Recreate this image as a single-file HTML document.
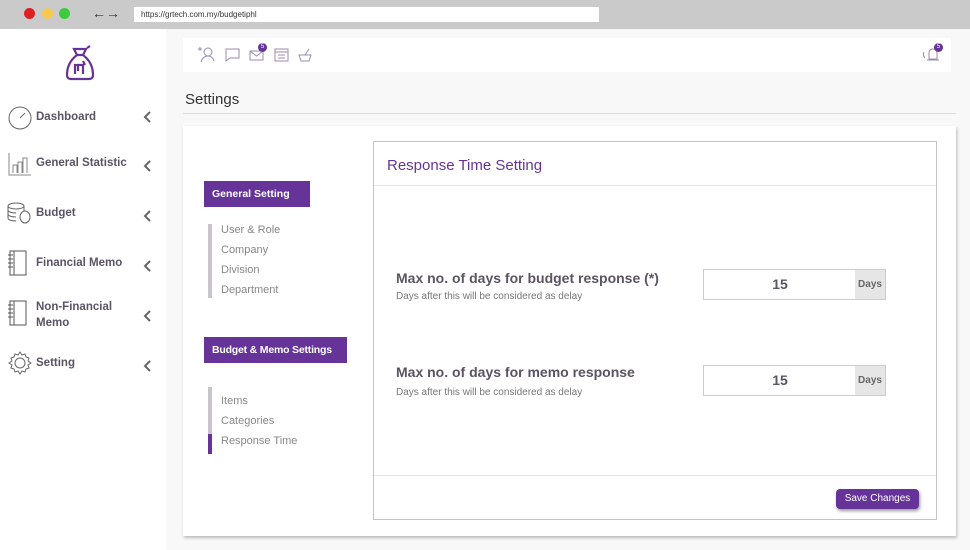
<!DOCTYPE html>
<html><head><style>
*{margin:0;padding:0;box-sizing:border-box}
body{width:970px;height:550px;overflow:hidden;background:#f8f8f8;font-family:"Liberation Sans",sans-serif;position:relative}
.abs{position:absolute}
.top{left:0;top:0;width:970px;height:29px;background:#cacaca}
.dot{width:11px;height:11px;border-radius:50%;top:8px}
.url{left:134px;top:7px;width:465px;height:15px;background:#fff;font-size:8px;color:#333;padding:3px 7px}
.side{left:0;top:29px;width:166px;height:521px;background:#fff}
.nav{left:8px;font-size:11.5px;font-weight:bold;color:#5a5463;white-space:nowrap}
.chev{left:143px}
.topbar{left:183px;top:38px;width:768px;height:34px;background:#fff}
.card{left:183px;top:126px;width:773px;height:410px;background:#fff;box-shadow:1px 2px 3px #bbb}
.btn{background:#663399;color:#fff;font-size:10.5px;font-weight:bold;padding:0 8px;height:26px;line-height:26px;white-space:nowrap}
.item{font-size:11px;color:#888}
.panel{left:373px;top:141px;width:564px;height:379px;border:1px solid #c4c4c4;background:#fff}
.lbl{font-size:14px;font-weight:bold;color:#5a5463}
.sub{font-size:10px;color:#777}
.inp{width:183px;height:31px;border:1px solid #ccc;background:#fff}
.inp span{position:absolute;left:0;top:0;width:152px;text-align:center;line-height:29px;font-size:14px;font-weight:bold;color:#5a5463}
.inp i{position:absolute;right:0;top:0;width:30px;height:29px;background:#e6e6e6;font-style:normal;font-size:10px;font-weight:bold;color:#666;line-height:29px;text-align:center}
.badge{width:9px;height:9px;border-radius:50%;background:#663399;color:#fff;font-size:6px;text-align:center;line-height:9px}
</style></head><body>
<div class="abs top"></div>
<div class="abs dot" style="left:24px;background:#e0201e"></div>
<div class="abs dot" style="left:42px;background:#f7c94f"></div>
<div class="abs dot" style="left:59px;background:#3ec93e"></div>
<div class="abs" style="left:92px;top:5px;font-size:14px;color:#333">←→</div>
<div class="abs url">https://grtech.com.my/budgetiphl</div>
<div class="abs side"></div>
<svg class="abs" style="left:64px;top:45px" width="32" height="36" viewBox="0 0 32 36" fill="none" stroke="#663399" stroke-width="2.2"><path d="M10 4h12l-3 6h-6z"/><path d="M13 10C5 16 3 24 3 30c0 3 2 4 4 4h18c2 0 4-1 4-4 0-6-2-14-10-20"/><path d="M11 29V20h8v9M14 20v6M19 16l2 4M23 3l3-2"/></svg>
<svg class="abs" style="left:7px;top:105px" width="26" height="26" fill="none" stroke="#666"><circle cx="13" cy="13" r="11"/><path d="M13 13l5-5"/></svg>
<div class="abs nav" style="top:111px;left:36px">Dashboard</div>
<svg class="abs" style="left:7px;top:151px" width="26" height="26" fill="none" stroke="#888"><path d="M2 2v22h22M6 22v-8h4v8M11 22v-11h4v11M16 22V7h4v15"/></svg>
<div class="abs nav" style="top:157px;left:36px">General Statistic</div>
<svg class="abs" style="left:7px;top:202px" width="26" height="22" fill="none" stroke="#666"><ellipse cx="9" cy="4" rx="8" ry="3"/><path d="M1 4v12c0 2 4 3 8 3M1 8c0 2 4 3 8 3M1 12c0 2 4 3 8 3M17 4v5"/><ellipse cx="18" cy="15" rx="5" ry="6"/></svg>
<div class="abs nav" style="top:207px;left:36px">Budget</div>
<svg class="abs" style="left:7px;top:250px" width="22" height="26" fill="none" stroke="#555"><rect x="3" y="1" width="16" height="24"/><path d="M7 1v24M1 5h5M1 9h5M1 13h5M1 17h5"/></svg>
<div class="abs nav" style="top:257px;left:36px">Financial Memo</div>
<svg class="abs" style="left:7px;top:300px" width="22" height="26" fill="none" stroke="#555"><rect x="3" y="1" width="16" height="24"/><path d="M7 1v24M1 5h5M1 9h5M1 13h5M1 17h5"/></svg>
<div class="abs nav" style="top:299px;left:36px;line-height:16px">Non-Financial<br>Memo</div>
<svg class="abs" style="left:7px;top:350px" width="26" height="26" fill="none" stroke="#666"><circle cx="13" cy="13" r="5"/><path d="M13 2l2 3 3-1 1 3 3 1-1 3 3 2-3 2 1 3-3 1-1 3-3-1-2 3-2-3-3 1-1-3-3-1 1-3-3-2 3-2-1-3 3-1 1-3 3 1z"/></svg>
<div class="abs nav" style="top:357px;left:36px">Setting</div>
<svg class="abs chev" style="top:110px" width="10" height="14" fill="none" stroke="#666" stroke-width="2"><path d="M7 2L2 7l5 5"/></svg>
<svg class="abs chev" style="top:159px" width="10" height="14" fill="none" stroke="#666" stroke-width="2"><path d="M7 2L2 7l5 5"/></svg>
<svg class="abs chev" style="top:209px" width="10" height="14" fill="none" stroke="#666" stroke-width="2"><path d="M7 2L2 7l5 5"/></svg>
<svg class="abs chev" style="top:259px" width="10" height="14" fill="none" stroke="#666" stroke-width="2"><path d="M7 2L2 7l5 5"/></svg>
<svg class="abs chev" style="top:309px" width="10" height="14" fill="none" stroke="#666" stroke-width="2"><path d="M7 2L2 7l5 5"/></svg>
<svg class="abs chev" style="top:359px" width="10" height="14" fill="none" stroke="#666" stroke-width="2"><path d="M7 2L2 7l5 5"/></svg>

<div class="abs topbar"></div>
<svg class="abs" style="left:196px;top:46px" width="120" height="18" fill="none" stroke="#9b8ab0" stroke-width="1"><circle cx="12" cy="6" r="4"/><path d="M5 16c1-4 4-6 7-6s5 2 6 5M2 3h4M4 1v4"/><path d="M30 3h13v9h-9l-4 3z"/><rect x="54" y="5" width="13" height="9"/><path d="M54 5l6.5 5 6.5-5"/><rect x="79" y="3" width="13" height="12"/><path d="M79 6h13M82 9h7M82 12h7"/><path d="M103 9h12l-2 6h-8zM109 9l4-6"/></svg>
<div class="abs badge" style="left:258px;top:43px">5</div>
<svg class="abs" style="left:922px;top:46px" width="20" height="16" fill="none" stroke="#9b8ab0"><path d="M7 13V7c0-3 2-4 4-4s4 1 4 4v6zM5 14h12M2 6c-1 2-1 4 1 6"/></svg>
<div class="abs badge" style="left:934px;top:43px">5</div>
<div class="abs" style="left:185px;top:91px;font-size:15px;color:#333">Settings</div>
<div class="abs" style="left:183px;top:113px;width:773px;height:1px;background:#ddd"></div>
<div class="abs card"></div>
<div class="abs btn" style="left:204px;top:181px;width:106px">General Setting</div>
<div class="abs" style="left:208px;top:224px;width:4px;height:74px;background:#c8c6cc"></div>
<div class="abs item" style="left:221px;top:224px">User &amp; Role</div>
<div class="abs item" style="left:221px;top:244px">Company</div>
<div class="abs item" style="left:221px;top:264px">Division</div>
<div class="abs item" style="left:221px;top:284px">Department</div>
<div class="abs btn" style="left:204px;top:337px;width:143px;letter-spacing:-0.2px">Budget &amp; Memo Settings</div>
<div class="abs" style="left:208px;top:387px;width:4px;height:47px;background:#c8c6cc"></div>
<div class="abs" style="left:208px;top:434px;width:4px;height:20px;background:#663399"></div>
<div class="abs item" style="left:221px;top:395px">Items</div>
<div class="abs item" style="left:221px;top:415px">Categories</div>
<div class="abs item" style="left:221px;top:435px">Response Time</div>
<div class="abs panel">
 <div class="abs" style="left:13px;top:15px;font-size:15px;color:#663399">Response Time Setting</div>
 <div class="abs" style="left:0;top:43px;width:562px;height:1px;background:#e4e4e4"></div>
 <div class="abs lbl" style="left:22px;top:128px">Max no. of days for budget response (*)</div>
 <div class="abs sub" style="left:22px;top:149px">Days after this will be considered as delay</div>
 <div class="abs inp" style="left:329px;top:127px"><span>15</span><i>Days</i></div>
 <div class="abs lbl" style="left:22px;top:222px">Max no. of days for memo response</div>
 <div class="abs sub" style="left:22px;top:245px">Days after this will be considered as delay</div>
 <div class="abs inp" style="left:329px;top:223px"><span>15</span><i>Days</i></div>
 <div class="abs" style="left:0;top:333px;width:562px;height:1px;background:#e4e4e4"></div>
 <div class="abs" style="left:462px;top:347px;width:83px;height:20px;border-radius:4px;background:#663399;color:#fff;font-size:10px;text-align:center;line-height:20px;box-shadow:1px 2px 3px #999">Save Changes</div>
</div>
</body></html>
